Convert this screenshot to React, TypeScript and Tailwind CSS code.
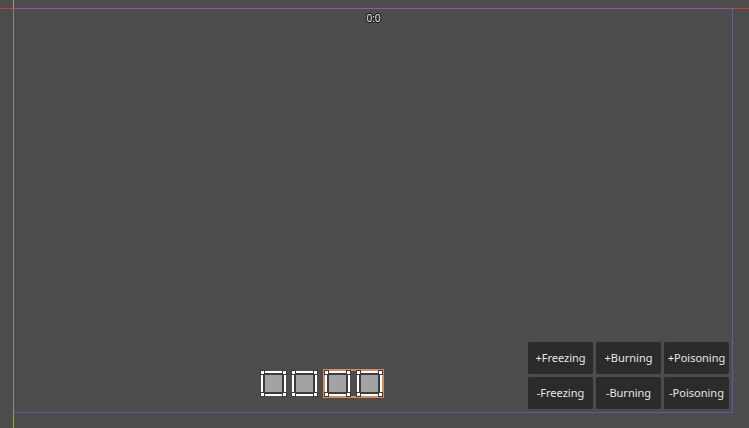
import React from "react";

function Handle({ className }: { className: string }) {
  return <div className={"absolute w-[5px] h-[5px] bg-white border border-[#3a3a3a] " + className} />;
}

function Slot() {
  return (
    <div className="relative w-[25px] h-[25px] border-2 border-white">
      <div className="w-full h-full border-2 border-[#3c3c3c] bg-[#a3a3a3]" />
      <Handle className="-left-[3px] -top-[3px]" />
      <Handle className="-right-[3px] -top-[3px]" />
      <Handle className="-left-[3px] -bottom-[3px]" />
      <Handle className="-right-[3px] -bottom-[3px]" />
    </div>
  );
}

const labels = ["+Freezing", "+Burning", "+Poisoning", "-Freezing", "-Burning", "-Poisoning"];

export default function App() {
  return (
    <div
      className="relative w-[749px] h-[428px] bg-[#4c4c4c] overflow-hidden"
      style={{ fontFamily: '"Noto Sans", "Open Sans", sans-serif' }}
    >
      {/* x axis */}
      <div className="absolute left-0 top-[8px] w-[13px] h-px bg-[#c83c3c]" />
      <div className="absolute left-[733px] top-[8px] w-[16px] h-px bg-[#c83c3c]" />
      {/* y axis */}
      <div className="absolute left-[13px] top-0 w-px h-[8px] bg-[#8aa84a]" />
      <div className="absolute left-[13px] top-[413px] w-px h-[15px] bg-[#80b02c]" />

      {/* viewport rect */}
      <div className="absolute left-[13px] top-[8px] w-[720px] h-[405px] flex flex-col items-center border-t border-l border-t-[#a44ca4] border-l-[#7a907a]">
        <div className="absolute right-0 top-0 w-px h-full bg-[#5c5cae]" />
        <div className="absolute left-0 bottom-0 w-full h-px bg-[#5c5cae]" />

        <span
          className="mt-[4px] text-[10px] leading-none text-white"
          style={{ textShadow: "1px 0 0 #000, -1px 0 0 #000, 0 1px 0 #000, 0 -1px 0 #000" }}
        >
          0:0
        </span>

        {/* inventory slots */}
        <div className="absolute left-[247px] top-[360px] flex items-center gap-[6px]">
          <Slot />
          <Slot />
          <div className="flex gap-[7px] border-2 border-[#e0875c]">
            <Slot />
            <Slot />
          </div>
        </div>

        {/* buttons */}
        <div className="absolute right-[4px] bottom-[4px] grid grid-cols-3 gap-[3px]">
          {labels.map((l) => (
            <div
              key={l}
              className="w-[65px] h-[32px] rounded-[2px] bg-[#2b2b2b] flex items-center justify-center text-[11px] text-[#e6e6e6]"
            >
              {l}
            </div>
          ))}
        </div>
      </div>
    </div>
  );
}
